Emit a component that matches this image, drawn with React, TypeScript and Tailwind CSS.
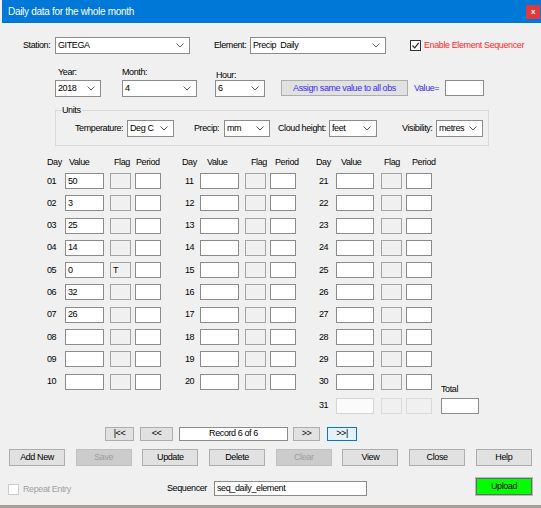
import React from "react";

function Chevron() {
  return (
    <svg width="8" height="5" viewBox="0 0 8 5" className="shrink-0">
      <path d="M0.5 0.5 L4 4 L7.5 0.5" fill="none" stroke="#606060" strokeWidth="1" />
    </svg>
  );
}

function Combo({ className, value }: { className: string; value: string }) {
  return (
    <div
      className={
        "flex items-center justify-between bg-white border border-[#8c8c8c] pl-[2px] pr-[5px] h-[17px] " +
        className
      }
    >
      <span className="whitespace-pre">{value}</span>
      <Chevron />
    </div>
  );
}

function Btn({ label, disabled }: { label: string; disabled?: boolean }) {
  return (
    <button
      type="button"
      className={
        "w-[56px] h-[17px] flex items-center justify-center border " +
        (disabled
          ? "bg-[#cccccc] border-[#bfbfbf] text-[#9d9d9d]"
          : "bg-[#e1e1e1] border-[#adadad] text-black")
      }
    >
      {label}
    </button>
  );
}

type ColCfg = {
  ml: string;
  dayW: string;
  dayPl: string;
  valueW: string;
  flagMl: string;
  hv: string;
  hf: string;
  hp: string;
};

const cols: ColCfg[] = [
  { ml: "ml-[47px]", dayW: "w-[18px]", dayPl: "pl-0", valueW: "w-[39px]", flagMl: "ml-[6px]", hv: "pl-[4px]", hf: "pl-[4px]", hp: "pl-[1px]" },
  { ml: "ml-[21px]", dayW: "w-[18px]", dayPl: "pl-[3px]", valueW: "w-[39px]", flagMl: "ml-[6px]", hv: "pl-[7px]", hf: "pl-[6px]", hp: "pl-[5px]" },
  { ml: "ml-[20px]", dayW: "w-[20px]", dayPl: "pl-[3px]", valueW: "w-[38px]", flagMl: "ml-[7px]", hv: "pl-[5px]", hf: "pl-[3px]", hp: "pl-[6px]" },
];

const values1 = ["50", "3", "25", "14", "0", "32", "26", "", "", ""];

function Column({ cfg, idx }: { cfg: ColCfg; idx: number }) {
  const days = Array.from({ length: idx === 2 ? 11 : 10 }, (_, i) => idx * 10 + i + 1);
  return (
    <div className={"flex flex-col " + cfg.ml}>
      <div className="flex h-[11px] whitespace-nowrap">
        <div className={cfg.dayW}>Day</div>
        <div className={cfg.valueW + " " + cfg.hv}>Value</div>
        <div className={cfg.flagMl + " w-[21px] " + cfg.hf}>Flag</div>
        <div className={"ml-[4px] w-[26px] " + cfg.hp}>Period</div>
      </div>
      <div className="flex flex-col mt-[5px]">
        {days.map((d, i) => {
          const dis = d === 31;
          const v = idx === 0 ? values1[i] : "";
          const flag = d === 5 ? "T" : "";
          return (
            <div
              key={d}
              className={"flex items-start " + (dis ? "h-[16px] mt-[2px]" : "h-[22.3px]")}
            >
              <div className={cfg.dayW + " h-[16px] flex items-center " + cfg.dayPl}>
                {String(d).padStart(2, "0")}
              </div>
              <div
                className={
                  cfg.valueW +
                  " h-[16px] flex items-center pl-[2px] border " +
                  (dis ? "bg-[#fbfbfb] border-[#d4d4d4]" : "bg-white border-[#8c8c8c]")
                }
              >
                {v}
              </div>
              <div
                className={
                  cfg.flagMl +
                  " w-[21px] h-[16px] flex items-center pl-[2px] bg-[#f0f0f0] border " +
                  (dis ? "border-[#dadada]" : "border-[#a3a3a3]")
                }
              >
                {flag}
              </div>
              <div
                className={
                  "ml-[4px] w-[26px] h-[16px] border " +
                  (dis ? "bg-[#f0f0f0] border-[#dadada]" : "bg-white border-[#8c8c8c]")
                }
              />
              {d === 30 && <div className="ml-[9px] mt-[10px]">Total</div>}
              {d === 31 && <div className="ml-[9px] w-[38px] h-[16px] bg-white border border-[#8c8c8c]" />}
            </div>
          );
        })}
      </div>
    </div>
  );
}

export default function App() {
  return (
    <div className="w-[541px] h-[508px] bg-[#f0f0f0] flex flex-col overflow-hidden font-['Liberation_Sans',Arial,sans-serif] text-[9px] leading-[11px] tracking-[-0.4px] text-black">
      {/* Title bar */}
      <div className="ml-[2px] h-[23px] shrink-0 bg-[#0078d7] flex items-center justify-between">
        <span className="pl-[6px] text-white text-[10px] tracking-[-0.3px]">Daily data for the whole month</span>
        <div className="w-[14px] h-[14px] mr-[1px] bg-[#e0393e] flex items-center justify-center text-white text-[8px] font-bold leading-none">
          x
        </div>
      </div>

      {/* Row 1 */}
      <div className="flex items-center h-[17px] mt-[14px] pl-[23px]">
        <div className="w-[32px]">Station:</div>
        <Combo className="w-[135px]" value="GITEGA" />
        <div className="ml-[24px] w-[36px]">Element:</div>
        <Combo className="w-[136px]" value="Precip  Daily" />
        <div className="ml-[24px] w-[11px] h-[11px] bg-white border border-[#333333] flex items-center justify-center">
          <svg width="9" height="9" viewBox="0 0 9 9">
            <path d="M1.5 4.5 L3.7 6.8 L7.8 1.8" fill="none" stroke="#222" strokeWidth="1.2" />
          </svg>
        </div>
        <span className="ml-[3px] text-[#ff2a2a] whitespace-nowrap">Enable Element Sequencer</span>
      </div>

      {/* Row 2 */}
      <div className="flex items-start mt-[13px] pl-[55px]">
        <div className="flex flex-col">
          <div className="h-[13px] pl-[3px]">Year:</div>
          <Combo className="w-[46px]" value="2018" />
        </div>
        <div className="flex flex-col ml-[21px]">
          <div className="h-[13px]">Month:</div>
          <Combo className="w-[75px]" value="4" />
        </div>
        <div className="flex flex-col ml-[18px]">
          <div className="h-[13px] pt-[3px] pl-[1px]">Hour:</div>
          <Combo className="w-[50px]" value="6" />
        </div>
        <div className="flex items-center mt-[13px] ml-[16px]">
          <button
            type="button"
            className="w-[127px] h-[16px] bg-[#e1e1e1] border border-[#adadad] text-[#3a2bff] flex items-center justify-center whitespace-nowrap"
          >
            Assign same value to all obs
          </button>
          <div className="ml-[6px] w-[31px] text-[#3a2bff]">Value=</div>
          <div className="w-[39px] h-[16px] -mt-[1px] bg-white border border-[#8c8c8c]" />
        </div>
      </div>

      {/* Units group */}
      <div className="relative ml-[55px] mt-[13px] w-[434px] h-[36px] border border-[#d9d9d9] pt-[9px]">
        <div className="absolute left-[5px] top-[-6px] bg-[#f0f0f0] px-[1px]">Units</div>
        <div className="flex items-center pl-[19px]">
          <div className="w-[52px]">Temperature:</div>
          <Combo className="w-[47px]" value="Deg C" />
          <div className="ml-[20px] w-[30px]">Precip:</div>
          <Combo className="w-[46px]" value="mm" />
          <div className="ml-[8px] w-[51px] whitespace-nowrap">Cloud height:</div>
          <Combo className="w-[48px]" value="feet" />
          <div className="ml-[25px] w-[34px]">Visibility:</div>
          <Combo className="w-[47px]" value="metres" />
        </div>
      </div>

      {/* Grid */}
      <div className="flex items-start mt-[11px]">
        {cols.map((c, i) => (
          <Column key={i} cfg={c} idx={i} />
        ))}
      </div>

      {/* Navigation */}
      <div className="flex items-center h-[14px] mt-[13px] pl-[105px]">
        <button type="button" className="w-[29px] h-[14px] bg-[#e1e1e1] border border-[#adadad] flex items-center justify-center">|&lt;&lt;</button>
        <button type="button" className="ml-[6px] w-[33px] h-[14px] bg-[#e1e1e1] border border-[#adadad] flex items-center justify-center">&lt;&lt;</button>
        <div className="ml-[6px] w-[109px] h-[14px] bg-white border border-[#8c8c8c] flex items-center justify-center">Record 6 of 6</div>
        <button type="button" className="ml-[5px] w-[27px] h-[14px] bg-[#e1e1e1] border border-[#adadad] flex items-center justify-center">&gt;&gt;</button>
        <button type="button" className="ml-[7px] w-[30px] h-[14px] bg-[#e5f1fb] border border-[#0078d7] flex items-center justify-center">&gt;&gt;|</button>
      </div>

      {/* Buttons */}
      <div className="flex items-center gap-[10.7px] mt-[8px] pl-[9px]">
        <Btn label="Add New" />
        <Btn label="Save" disabled />
        <Btn label="Update" />
        <Btn label="Delete" />
        <Btn label="Clear" disabled />
        <Btn label="View" />
        <Btn label="Close" />
        <Btn label="Help" />
      </div>

      {/* Bottom row */}
      <div className="flex items-start h-[18px] mt-[12px]">
        <div className="w-[167px] pl-[8px] mt-[6px] flex items-center h-[11px]">
          <div className="w-[11px] h-[11px] bg-white border border-[#cccccc]" />
          <span className="ml-[4px] text-[#a0a0a0] whitespace-nowrap">Repeat Entry</span>
        </div>
        <div className="flex items-center mt-[3px] h-[15px]">
          <div className="w-[47px]">Sequencer</div>
          <div className="w-[153px] h-[15px] bg-white border border-[#8c8c8c] pl-[2px] flex items-center">seq_daily_element</div>
        </div>
        <button
          type="button"
          className="ml-[109px] w-[56px] h-[17px] bg-[#00ff00] border border-[#6a6a6a] outline outline-1 outline-[#b8b8b8] flex items-center justify-center"
        >
          Upload
        </button>
      </div>

      <div className="mt-auto h-[3px] shrink-0 bg-[#a7a19b]" />
    </div>
  );
}
